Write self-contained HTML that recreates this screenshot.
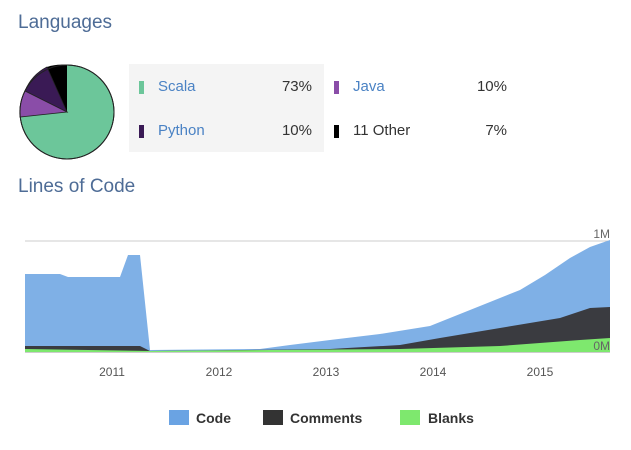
<!DOCTYPE html>
<html><head><meta charset="utf-8"><style>
body{margin:0;width:631px;height:450px;background:#fff;font-family:"Liberation Sans",sans-serif;overflow:hidden;position:relative}
.h{position:absolute;left:18px;color:#4e6c96;font-size:19px}
.lb{position:absolute;left:129px;top:64px;width:195px;height:88px;background:#f4f4f4}
.it{position:absolute;font-size:15px}
.sw{position:absolute;width:5px;height:13px}
.n{color:#4a82c4}
.p{color:#333;text-align:right;width:40px}
</style></head><body>
<div class="h" style="top:12px">Languages</div>
<svg style="position:absolute;left:0;top:0" width="130" height="170">
<circle cx="67" cy="112" r="47" fill="#6cc69a" stroke="#222" stroke-width="1"/>
<path d="M67 112 L67 65 A47 47 0 0 0 47 67 Z" fill="#000"/>
<path d="M67 112 L47 67 A47 47 0 0 0 25 91 Z" fill="#3a1a55" stroke="#222" stroke-width=".8"/>
<path d="M67 112 L25 91 A47 47 0 0 0 20 117 Z" fill="#8a4da8" stroke="#222" stroke-width=".8"/>
<circle cx="67" cy="112" r="47" fill="none" stroke="#222" stroke-width="1"/>
</svg>
<div class="lb"></div>
<div class="sw" style="left:139px;top:81px;background:#6cc69a"></div>
<div class="it n" style="left:158px;top:78px">Scala</div>
<div class="it p" style="left:272px;top:78px">73%</div>
<div class="sw" style="left:139px;top:125px;background:#3a1a55"></div>
<div class="it n" style="left:158px;top:122px">Python</div>
<div class="it p" style="left:272px;top:122px">10%</div>
<div class="sw" style="left:334px;top:81px;background:#8a4da8"></div>
<div class="it n" style="left:353px;top:78px">Java</div>
<div class="it p" style="left:467px;top:78px">10%</div>
<div class="sw" style="left:334px;top:125px;background:#000"></div>
<div class="it" style="left:353px;top:122px;color:#333">11 Other</div>
<div class="it p" style="left:467px;top:122px">7%</div>
<div class="h" style="top:176px">Lines of Code</div>
<svg style="position:absolute;left:0;top:220px" width="631" height="230" viewBox="0 220 631 230">
<line x1="25" y1="241" x2="610" y2="241" stroke="#ccc"/>
<text x="610" y="238" font-size="12" fill="#666" text-anchor="end" font-family="Liberation Sans">1M</text>
<path d="M25 274 L60 274 L68 277 L120 277 L128 255 L140 255 L150 350 L260 349 L290 345 L330 340 L380 334 L430 326 L460 314 L490 302 L520 290 L545 275 L570 258 L590 247 L610 240 L610 352 L25 352Z" fill="#7fb0e6"/>
<path d="M25 346 L140 346 L150 351 L330 349 L400 345 L440 338 L500 328 L560 318 L590 308 L610 307 L610 352 L25 352Z" fill="#3a3b40"/>
<path d="M25 349 L150 351 L400 349 L500 346 L580 340 L610 338 L610 352 L25 352Z" fill="#7ee86e"/>
<text x="610" y="350" font-size="12" fill="#666" text-anchor="end" font-family="Liberation Sans">0M</text>
<line x1="25" y1="352.5" x2="610" y2="352.5" stroke="#ccc"/>
<g font-size="12" fill="#555" text-anchor="middle" font-family="Liberation Sans">
<text x="112" y="376">2011</text><text x="219" y="376">2012</text><text x="326" y="376">2013</text><text x="433" y="376">2014</text><text x="540" y="376">2015</text></g>
<g font-size="14" font-weight="bold" fill="#333" font-family="Liberation Sans">
<rect x="169" y="410" width="20" height="15" fill="#6aa3e3"/><text x="196" y="423">Code</text>
<rect x="263" y="410" width="20" height="15" fill="#333"/><text x="290" y="423">Comments</text>
<rect x="400" y="410" width="20" height="15" fill="#7ee86e"/><text x="428" y="423">Blanks</text></g>
</svg>
</body></html>
